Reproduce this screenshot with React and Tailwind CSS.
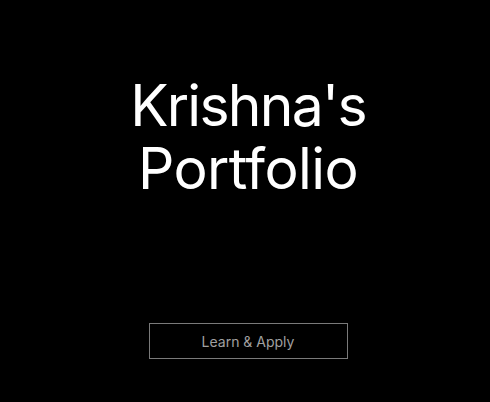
export default function App() {
  return (
    <div className="w-[490px] h-[402px] bg-black flex flex-col items-center pl-[6px]" style={{ fontFamily: "Inter, 'Noto Sans', sans-serif" }}>
      <h1 className="mt-[74px] flex flex-col items-center text-white text-[57px] leading-[63px] font-normal">
        <span className="tracking-[-0.03em]">Krishna's</span>
        <span className="tracking-[-0.01em]">Portfolio</span>
      </h1>
      <button className="mt-[123px] w-[199px] h-[36px] border border-[#7a7a7a] text-[#a0a0a0] text-[14px] bg-black">
        Learn &amp; Apply
      </button>
    </div>
  );
}
